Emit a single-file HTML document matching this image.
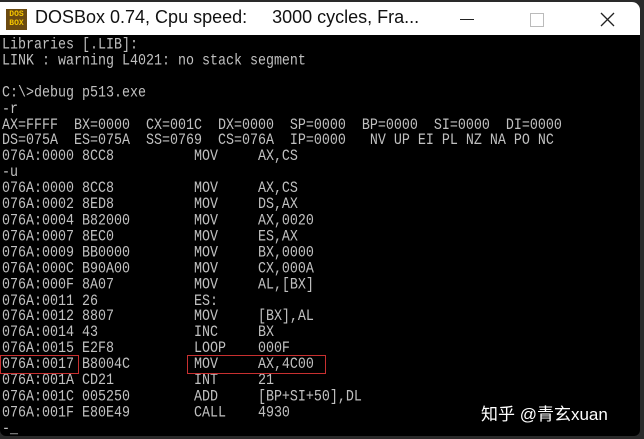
<!DOCTYPE html>
<html><head><meta charset="utf-8"><style>
html,body{margin:0;width:644px;height:439px;overflow:hidden}
body{background:#2a2a2a;position:relative;font-family:"Liberation Sans",sans-serif}
#tb{position:absolute;left:0;top:2px;width:640px;height:33px;background:#fff;border-top-right-radius:8px}
#icon{position:absolute;left:6px;top:7px;width:21px;height:21px;background:#6b4a10;color:#f4c400;font:bold 8px/9px "Liberation Mono",monospace;text-align:center;padding-top:1px;box-sizing:border-box}
#title{position:absolute;left:35px;top:5px;font-size:18px;color:#111;white-space:pre}
#term{position:absolute;left:0;top:35px;width:640px;height:401px;background:#000;border-bottom-left-radius:6px;border-bottom-right-radius:6px;overflow:hidden}
pre{margin:0;position:absolute;left:2px;top:3px;font:13.33px/13.913px "Liberation Mono",monospace;color:#c0c0c0;transform:scaleY(1.15);transform-origin:0 0}
.box{position:absolute;border:1px solid #c83030}
#wm{position:absolute;left:481px;top:400px;color:#fff;font-size:17px;font-family:"Liberation Sans","Noto Sans CJK SC",sans-serif}
</style></head><body>
<div id="tb"><div id="icon">DOS<br>BOX</div><div id="title">DOSBox 0.74, Cpu speed:     3000 cycles, Fra...</div>
<div style="position:absolute;left:460px;top:17px;width:14px;height:1px;background:#222"></div>
<div style="position:absolute;left:530px;top:11px;width:12px;height:12px;border:1px solid #bbb"></div>
<svg style="position:absolute;left:600px;top:10px" width="15" height="15"><path d="M1 1L14 14M14 1L1 14" stroke="#222" stroke-width="1.3"/></svg>
</div>
<div id="term"><pre>Libraries [.LIB]:
LINK : warning L4021: no stack segment

C:\>debug p513.exe
-r
AX=FFFF  BX=0000  CX=001C  DX=0000  SP=0000  BP=0000  SI=0000  DI=0000
DS=075A  ES=075A  SS=0769  CS=076A  IP=0000   NV UP EI PL NZ NA PO NC
076A:0000 8CC8          MOV     AX,CS
-u
076A:0000 8CC8          MOV     AX,CS
076A:0002 8ED8          MOV     DS,AX
076A:0004 B82000        MOV     AX,0020
076A:0007 8EC0          MOV     ES,AX
076A:0009 BB0000        MOV     BX,0000
076A:000C B90A00        MOV     CX,000A
076A:000F 8A07          MOV     AL,[BX]
076A:0011 26            ES:
076A:0012 8807          MOV     [BX],AL
076A:0014 43            INC     BX
076A:0015 E2F8          LOOP    000F
076A:0017 B8004C        MOV     AX,4C00
076A:001A CD21          INT     21
076A:001C 005250        ADD     [BP+SI+50],DL
076A:001F E80E49        CALL    4930
-_</pre>
<div class="box" style="left:0;top:320px;width:77px;height:17px"></div>
<div class="box" style="left:187px;top:320px;width:137px;height:17px"></div>
</div>
<div id="wm">知乎 @青玄xuan</div>
</body></html>
